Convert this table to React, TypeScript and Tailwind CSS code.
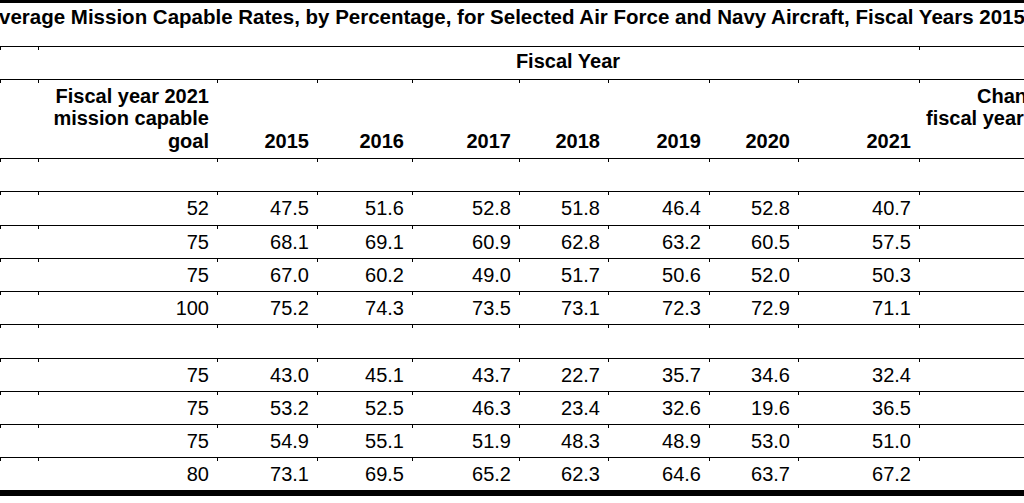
import React from "react";

const GRID =
  "grid grid-cols-[38px_179px_100px_95px_107px_89px_101px_89px_121px_1fr]";

const TICK =
  "relative before:content-[''] before:absolute before:left-0 before:top-0 before:w-px before:h-[3px] before:bg-black";

type Row = { goal: string; vals: string[] } | null;

const rows: Row[] = [
  null,
  { goal: "52", vals: ["47.5", "51.6", "52.8", "51.8", "46.4", "52.8", "40.7"] },
  { goal: "75", vals: ["68.1", "69.1", "60.9", "62.8", "63.2", "60.5", "57.5"] },
  { goal: "75", vals: ["67.0", "60.2", "49.0", "51.7", "50.6", "52.0", "50.3"] },
  { goal: "100", vals: ["75.2", "74.3", "73.5", "73.1", "72.3", "72.9", "71.1"] },
  null,
  { goal: "75", vals: ["43.0", "45.1", "43.7", "22.7", "35.7", "34.6", "32.4"] },
  { goal: "75", vals: ["53.2", "52.5", "46.3", "23.4", "32.6", "19.6", "36.5"] },
  { goal: "75", vals: ["54.9", "55.1", "51.9", "48.3", "48.9", "53.0", "51.0"] },
  { goal: "80", vals: ["73.1", "69.5", "65.2", "62.3", "64.6", "63.7", "67.2"] },
];

const heights = [
  "h-[33px]",
  "h-[34px]",
  "h-[33px]",
  "h-[33px]",
  "h-[33px]",
  "h-[34px]",
  "h-[33px]",
  "h-[33px]",
  "h-[33px]",
  "h-[33px]",
];

const years = ["2015", "2016", "2017", "2018", "2019", "2020", "2021"];

export default function App() {
  return (
    <div className="w-[1024px] h-[503px] overflow-hidden bg-white text-black font-['Liberation_Sans',Arial,sans-serif]">
      <div className="h-[3px] bg-black" />
      <div className="h-[43px] pt-[2px]">
        <div className="ml-[-15px] whitespace-nowrap text-[20.5px] leading-[23px] font-bold">
          Average Mission Capable Rates, by Percentage, for Selected Air Force and Navy Aircraft, Fiscal Years 2015
        </div>
      </div>

      {/* Fiscal Year spanning header */}
      <div className={`${GRID} h-[33px] border-t border-black`}>
        <div className={TICK} />
        <div className={TICK} />
        <div className="col-span-7 flex items-center justify-center text-[20px] font-bold leading-[23px] pb-[3px]">
          Fiscal Year
        </div>
        <div className={TICK} />
      </div>

      {/* column header row */}
      <div className={`${GRID} h-[79px] border-t border-black text-[20px] font-bold leading-[22.5px]`}>
        <div className={TICK} />
        <div className={`${TICK} flex flex-col items-end justify-end pr-[8px] pb-[6px] text-right`}>
          <span>Fiscal year 2021</span>
          <span>mission capable</span>
          <span>goal</span>
        </div>
        {years.map((y) => (
          <div key={y} className={`${TICK} flex items-end justify-end pr-[8px] pb-[6px]`}>
            {y}
          </div>
        ))}
        <div className={`${TICK} flex flex-col justify-end pb-[6px] whitespace-nowrap overflow-hidden`}>
          <span className="pl-[58px]">Change</span>
          <span className="pl-[7px]">fiscal year</span>
          <span>&nbsp;</span>
        </div>
      </div>

      {rows.map((r, i) => (
        <div
          key={i}
          className={`${GRID} ${heights[i]} border-t border-black text-[20px] leading-[23px]`}
        >
          <div className={TICK} />
          <div className={`${TICK} flex items-center justify-end pr-[8px]`}>
            {r ? r.goal : ""}
          </div>
          {years.map((y, j) => (
            <div key={y} className={`${TICK} flex items-center justify-end pr-[8px]`}>
              {r ? r.vals[j] : ""}
            </div>
          ))}
          <div className={TICK} />
        </div>
      ))}

      <div className="h-[6px] bg-black" />
    </div>
  );
}
